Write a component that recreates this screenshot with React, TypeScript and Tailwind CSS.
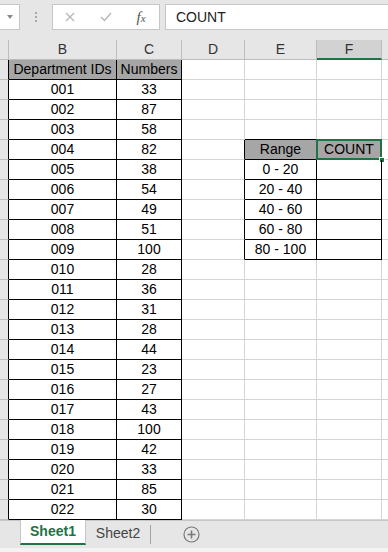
import React from "react";

const ids = ["001", "002", "003", "004", "005", "006", "007", "008", "009", "010", "011", "012", "013", "014", "015", "016", "017", "018", "019", "020", "021", "022"];
const nums = [33, 87, 58, 82, 38, 54, 49, 51, 100, 28, 36, 31, 28, 44, 23, 27, 43, 100, 42, 33, 85, 30];
const ranges = ["0 - 20", "20 - 40", "40 - 60", "60 - 80", "80 - 100"];

const font = { fontFamily: '"Liberation Sans", Arial, sans-serif' };

function TopBar() {
    return (
        <div className="h-[40px] bg-[#e6e6e6] relative flex items-start pt-[4px]">
            {/* name box */}
            <div className="w-[20px] h-[26px] bg-white border-y border-r border-[#c6c6c6] flex items-center justify-center">
                <svg width="6" height="4" viewBox="0 0 6 4">
                    <path d="M0 0 L6 0 L3 4 Z" fill="#8a8a8a" />
                </svg>
            </div>
            <div className="w-[32px] h-[26px] flex flex-col items-center justify-center gap-[2px]">
                <div className="w-[2px] h-[2px] bg-[#a8a8a8]" />
                <div className="w-[2px] h-[2px] bg-[#a8a8a8]" />
                <div className="w-[2px] h-[2px] bg-[#a8a8a8]" />
            </div>
            {/* cancel / enter / fx */}
            <div className="w-[108px] h-[26px] bg-white border border-[#c6c6c6] flex items-center">
                <div className="w-[34px] flex justify-center">
                    <svg width="10" height="10" viewBox="0 0 10 10">
                        <path d="M1 1 L9 9 M9 1 L1 9" stroke="#b4b4b4" strokeWidth="1.2" fill="none" />
                    </svg>
                </div>
                <div className="w-[38px] flex justify-center">
                    <svg width="12" height="10" viewBox="0 0 12 10">
                        <path d="M1 5 L4.5 8.5 L11 1" stroke="#b4b4b4" strokeWidth="1.3" fill="none" />
                    </svg>
                </div>
                <div className="flex-1 flex justify-center pr-[2px]">
                    <span className="italic text-[#555] text-[15px] leading-none" style={{ fontFamily: '"Liberation Serif", serif' }}>
                        f<span className="text-[11px]">x</span>
                    </span>
                </div>
            </div>
            <div className="w-[5px]" />
            <div className="flex-1 h-[26px] bg-white border-y border-l border-[#c6c6c6] flex items-center pl-[10px] text-[14px] text-[#222]" style={font}>
                COUNT
            </div>
        </div>
    );
}

function ColumnHeaders() {
    const letters = ["B", "C", "D", "E", "F"];
    const widths = ["w-[108px]", "w-[65px]", "w-[63px]", "w-[72px]", "w-[65px]"];
    return (
        <div className="h-[20px] flex bg-[#e6e6e6] text-[14px] text-[#333]" style={font}>
            <div className="w-[9px] h-full border-r border-b border-[#bdbdbd]" />
            {letters.map((l, i) =>
                l === "F" ? (
                    <div key={l} className={`${widths[i]} h-full bg-[#d2d2d2] border-r border-[#bdbdbd] border-b-2 border-b-[#217346] flex items-center justify-center`}>
                        {l}
                    </div>
                ) : (
                    <div key={l} className={`${widths[i]} h-full border-r border-b border-[#bdbdbd] flex items-center justify-center`}>
                        {l}
                    </div>
                )
            )}
            <div className="flex-1 h-full border-b border-[#bdbdbd]" />
        </div>
    );
}

function Row({ r }: { r: number }) {
    const head = r === 1;
    const b = head ? "Department IDs" : ids[r - 2];
    const c = head ? "Numbers" : String(nums[r - 2]);
    const inRange = r >= 5 && r <= 10;
    const aboveRange = r === 4;
    let e = "";
    let f = "";
    if (r === 5) {
        e = "Range";
        f = "COUNT";
    } else if (r > 5 && r <= 10) {
        e = ranges[r - 6];
    }

    return (
        <div className="h-[20px] flex text-[14px] text-black" style={font}>
            <div className="w-[9px] h-full bg-[#e6e6e6] border-r border-r-black border-b border-b-[#bdbdbd]" />
            <div className={`w-[108px] h-full border-r border-b border-black flex items-center justify-center ${head ? "bg-[#a6a6a6]" : "bg-white"}`}>
                {b}
            </div>
            <div className={`w-[65px] h-full border-r border-b border-black flex items-center justify-center ${head ? "bg-[#a6a6a6]" : "bg-white"}`}>
                {c}
            </div>
            <div className={`w-[63px] h-full border-b border-b-[#d4d4d4] border-r ${inRange ? "border-r-black" : "border-r-[#d4d4d4]"}`} />
            <div className={`w-[72px] h-full border-r border-b flex items-center justify-center ${inRange ? "border-black" : aboveRange ? "border-r-[#d4d4d4] border-b-black" : "border-[#d4d4d4]"} ${r === 5 ? "bg-[#a6a6a6]" : ""}`}>
                {e}
            </div>
            <div className={`relative w-[65px] h-full border-r border-b flex items-center justify-center ${inRange ? "border-black" : aboveRange ? "border-r-[#d4d4d4] border-b-black" : "border-[#d4d4d4]"} ${r === 5 ? "bg-[#a6a6a6]" : ""}`}>
                {f}
                {r === 5 && (
                    <>
                        <div className="absolute left-[-1px] top-[-1px] w-[66px] h-[21px] border-2 border-[#217346]" />
                        <div className="absolute right-[-4px] bottom-[-4px] w-[6px] h-[6px] bg-[#217346] border border-white" />
                    </>
                )}
            </div>
            <div className="flex-1 h-full border-b border-[#d4d4d4]" />
        </div>
    );
}

function TabBar() {
    return (
        <div>
            <div className="h-[28px] bg-[#e6e6e6] border-t border-[#c6c6c6] flex items-start text-[14px]" style={font}>
                <div className="w-[20px]" />
                <div className="w-[66px] h-[25px] bg-white border-x border-[#c6c6c6] border-b-2 border-b-[#217346] flex items-center justify-center font-bold text-[#217346] -mt-px">
                    Sheet1
                </div>
                <div className="w-[64px] h-[25px] flex items-center justify-center text-[#444]">Sheet2</div>
                <div className="w-px h-[19px] bg-[#a0a0a0] mt-[4px]" />
                <div className="w-[32px]" />
                <div className="h-[26px] flex items-center">
                    <svg width="17" height="17" viewBox="0 0 17 17">
                        <circle cx="8.5" cy="8.5" r="7.5" stroke="#7a7a7a" strokeWidth="1.2" fill="none" />
                        <path d="M8.5 4.5 V12.5 M4.5 8.5 H12.5" stroke="#7a7a7a" strokeWidth="1.6" />
                    </svg>
                </div>
            </div>
            <div className="h-[4px] bg-[#f3f3f3]" />
        </div>
    );
}

export default function App() {
    const rows = Array.from({ length: 23 }, (_, i) => i + 1);
    return (
        <div className="w-[388px] h-[552px] overflow-hidden bg-white flex flex-col">
            <TopBar />
            <ColumnHeaders />
            {rows.map((r) => (
                <Row key={r} r={r} />
            ))}
            <TabBar />
        </div>
    );
}
